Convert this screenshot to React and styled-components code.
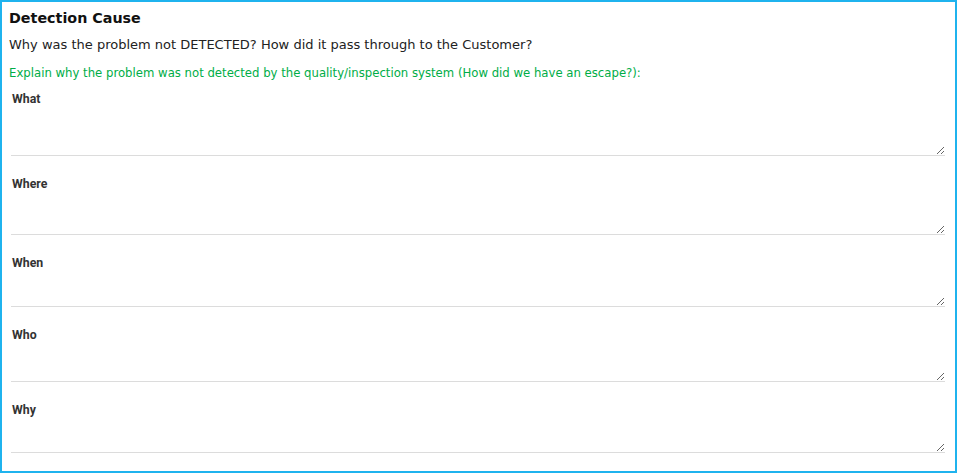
import React from "react";
import styled, { createGlobalStyle } from "styled-components";

const Global = createGlobalStyle`
  html, body { margin: 0; padding: 0; background: #fff; }
  body { font-family: "DejaVu Sans", Verdana, sans-serif; }
`;

const Panel = styled.section`
  box-sizing: border-box;
  width: 957px;
  height: 473px;
  border: 2px solid #1fb3ee;
  padding: 6px 10px 0 7px;
  display: flex;
  flex-direction: column;
`;

const Title = styled.h2`
  margin: 0;
  font-family: "DejaVu Sans", Verdana, sans-serif;
  font-weight: bold;
  font-size: 14.3px;
  line-height: 20px;
  color: #111;
`;

const Question = styled.p`
  margin: 8px 0 0;
  font-size: 13px;
  line-height: 18px;
  color: #222;
`;

const Hint = styled.p`
  margin: 11px 0 0;
  font-size: 11.7px;
  line-height: 16px;
  color: #00ad47;
`;

const Field = styled.label`
  display: flex;
  flex-direction: column;
  margin-top: ${(p) => p.$top}px;
  padding-left: 2px;
`;

const Label = styled.span`
  padding-left: 1px;
  font-family: Roboto, "Liberation Sans", Arial, sans-serif;
  font-weight: bold;
  font-size: 12.3px;
  line-height: 16px;
  color: #333;
`;

const Area = styled.textarea`
  box-sizing: border-box;
  width: 100%;
  height: ${(p) => p.$h}px;
  margin-top: 2px;
  border: none;
  border-bottom: 1px solid #dcdcdc;
  resize: vertical;
  outline: none;
  padding: 4px 0;
  font: 13px "DejaVu Sans", sans-serif;
  background: transparent;
`;

const fields = [
  { label: "What", h: 47, top: 10 },
  { label: "Where", h: 41, top: 20 },
  { label: "When", h: 34, top: 20 },
  { label: "Who", h: 37, top: 20 },
  { label: "Why", h: 33, top: 20 },
];

export default function App() {
  return (
    <>
      <Global />
      <Panel>
        <Title>Detection Cause</Title>
        <Question>
          Why was the problem not DETECTED? How did it pass through to the Customer?
        </Question>
        <Hint>
          Explain why the problem was not detected by the quality/inspection system (How did we have an escape?):
        </Hint>
        {fields.map((f) => (
          <Field key={f.label} $top={f.top}>
            <Label>{f.label}</Label>
            <Area $h={f.h} />
          </Field>
        ))}
      </Panel>
    </>
  );
}
